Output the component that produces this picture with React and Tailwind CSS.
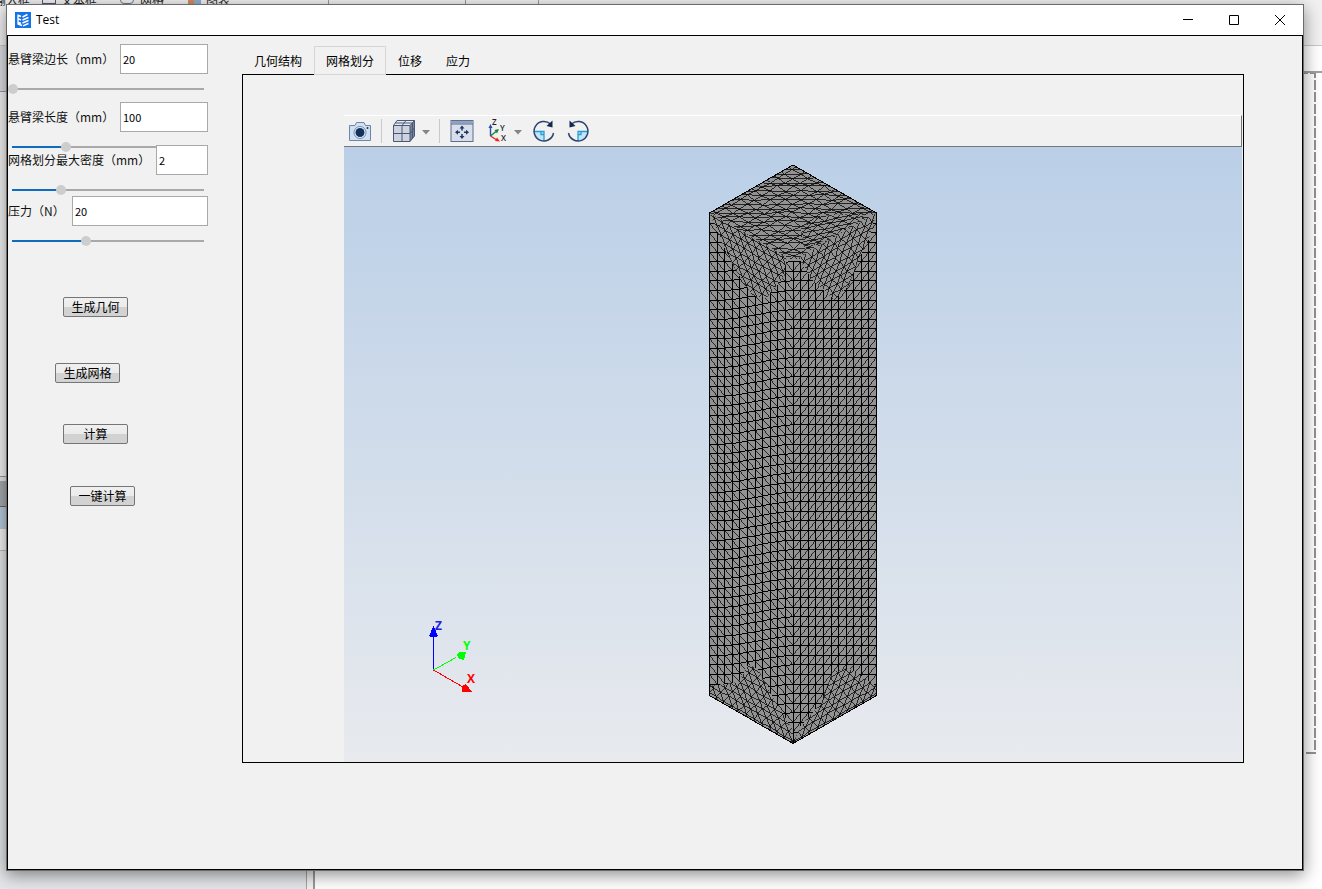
import { useState } from "react";

// ---- mesh geometry (svg units, one unit per pixel) ----

const GREY = "#929292";
const COLS = 11;
const COL_W = 83.5 / COLS;
const ROW_H = 9.6;
const LEFT_DRIFT = [0, 0, 0, -0.5, -1.5, -3, -4, -5.5, -7, -8, -9, -9.6];
const NO_DRIFT = LEFT_DRIFT.map(() => 0);

const jitter = (i, j, amount) => {
  const s = Math.sin(i * 127.1 + j * 311.7) * 43758.5453;
  return (s - Math.floor(s) - 0.5) * amount;
};

const line = (a, b) =>
  `M${a[0].toFixed(1)} ${a[1].toFixed(1)}L${b[0].toFixed(1)} ${b[1].toFixed(1)}`;

// Regular columns and rows, with one diagonal per cell kept as a thinner path
const grid = (x0, drift, falling) => {
  const node = (i, j) => [x0 + j * COL_W, 40 + i * ROW_H + drift[j]];
  let d = "";
  let diagonals = "";
  for (let i = 0; i < 58; i++) {
    for (let j = 0; j <= COLS; j++) {
      d += line(node(i, j), node(i + 1, j));
      if (j < COLS) {
        d += line(node(i, j), node(i, j + 1));
        diagonals += falling
          ? line(node(i, j), node(i + 1, j + 1))
          : line(node(i + 1, j), node(i, j + 1));
      }
    }
  }
  return { d, diagonals };
};

// Free triangle mesh spanned by the vectors a and b
const lattice = (origin, a, b, amount) => {
  const node = (i, j) => [
    origin[0] + i * a[0] + j * b[0] + jitter(i, j, amount),
    origin[1] + i * a[1] + j * b[1] + jitter(j + 40, i, amount),
  ];
  let diagonals = "";
  for (let i = -16; i < 16; i++) {
    for (let j = -16; j < 16; j++) {
      diagonals += line(node(i, j), node(i + 1, j));
      diagonals += line(node(i, j), node(i, j + 1));
      diagonals += line(node(i + 1, j), node(i, j + 1));
    }
  }
  return { d: "", diagonals };
};

const faces = [
  {
    id: "face-left",
    points: "1,49 84.5,97 84.5,579.5 1,531.5",
    ...grid(1, LEFT_DRIFT, true),
  },
  {
    id: "face-right",
    points: "84.5,97 168,49 168,531.5 84.5,579.5",
    ...grid(84.5, NO_DRIFT, false),
  },
  {
    id: "face-top",
    points: "84.5,1 168,49 84.5,97 1,49",
    ...lattice([84.5, 49], [7.6, -4.4], [-7.6, -4.4], 2.4),
  },
  {
    id: "face-top-dense",
    points: "92,64 112,52 158,49 150,57 118,76 96,84",
    ...lattice([110, 62], [12, -2.5], [6, 2.8], 1.4),
  },
  {
    id: "patch-left-top",
    points: "1,49 78,93 76,112 58,134 44,132 26,104 16,84",
    ...lattice([40, 80], [7.6, 4.4], [3.4, 9], 1.6),
  },
  {
    id: "patch-right-top",
    points: "168,49 90,94 104,116 126,136 140,122 150,96 160,76",
    ...lattice([130, 84], [-7.6, 4.4], [-3.4, 9], 1.6),
  },
  {
    id: "patch-left-bottom",
    points: "1,531.5 1,522 30,518 40,500 50,506 68,540 84.5,566 84.5,579.5",
    ...lattice([50, 550], [-7.6, -4.4], [-3.4, -9], 1.6),
  },
  {
    id: "patch-right-bottom",
    points: "168,531.5 168,522 140,504 124,508 112,540 92,562 84.5,579.5",
    ...lattice([120, 550], [7.6, -4.4], [3.4, -9], 1.6),
  },
];

const MeshModel = () => (
  <svg
    width="170"
    height="581"
    viewBox="-0.5 0 170 581"
    fill="none"
    stroke="#000"
    shapeRendering="crispEdges"
    role="img"
    aria-label="网格模型"
  >
    {faces.map((face) => (
      <g key={face.id}>
        <clipPath id={face.id}>
          <polygon points={face.points} />
        </clipPath>
        <polygon points={face.points} fill={GREY} stroke="none" />
        <g clipPath={`url(#${face.id})`}>
          <path d={face.d} />
          <path d={face.diagonals} strokeWidth="0.75" />
        </g>
      </g>
    ))}
    <path d="M84.5 1L168 49V531.5L84.5 579.5L1 531.5V49ZM84.5 97V579.5" />
  </svg>
);

const AxisTriad = () => (
  <svg
    className="absolute bottom-[60px] left-[80px]"
    width="60"
    height="84"
    viewBox="0 0 60 84"
    fontFamily="'Open Sans', sans-serif"
    fontSize="12"
    fontWeight="700"
  >
    <g shapeRendering="crispEdges">
      <path d="M9.500 52V14" stroke="#00f" />
      <path d="M9.500 52L32 39.500" stroke="#0f0" />
      <path d="M9.500 52L38 68.500" stroke="#f00" />
      <path d="M9.500 8L14 18Q9.500 21 5 18Z" fill="#00f" />
      <path d="M42 34L40 42L35 41Q31 36 36 34Z" fill="#0f0" />
      <path d="M48 74L38 73.500Q36 68 42 66Z" fill="#f00" />
    </g>
    <text x="11" y="12" fill="#2222dd">Z</text>
    <text x="39" y="32" fill="#0f0">Y</text>
    <text x="43" y="65" fill="#f00">X</text>
  </svg>
);

// ---- toolbar icons ----

const CameraIcon = () => (
  <svg width="24" height="24" viewBox="0 0 24 24">
    <path
      d="M1.500 6.500H7L8.500 3.500H16L17.500 6.500H22.500V21.500H1.500Z"
      fill="#cfe0f2"
      stroke="#6d86a6"
      strokeLinejoin="round"
    />
    <circle cx="12" cy="13.500" r="6" fill="#e9f1fa" stroke="#7289a8" />
    <circle cx="12" cy="13.500" r="4.500" fill="#14305e" />
    <circle cx="19.500" cy="9" r="1" fill="#14305e" />
  </svg>
);

const CubeIcon = () => (
  <svg width="24" height="24" viewBox="0 0 24 24" strokeLinejoin="round">
    <path d="M1.500 6.500L5 1.500H22.500L18 6.500Z" fill="#e6ebf3" />
    <path d="M1.500 6.500H18V22.500H1.500Z" fill="#cdd3df" />
    <path d="M18 6.500L22.500 1.500V17L18 22.500Z" fill="#76839d" />
    <path
      d="M1.500 6.500L5 1.500H22.500V17L18 22.500H1.500ZM1.500 6.500H18V22.500M18 6.500L22.500 1.500M10 22.500V6.500L14 1.500M1.500 14.500H18L22.500 9M3.500 4H20.500V19.500"
      fill="none"
      stroke="#4a5876"
    />
  </svg>
);

const FitIcon = () => (
  <svg width="24" height="24" viewBox="0 0 24 24">
    <rect x="1" y="1.500" width="22" height="21" fill="#d9dfea" stroke="#5d6e8d" />
    <path d="M1.500 2H22.500V4.500H1.500Z" fill="#8ea4c6" />
    <path d="M1 5H23" stroke="#5d6e8d" />
    <path
      d="M12 6.500L14.500 9.500H9.500ZM12 20L14.500 17H9.500ZM5 13.200L8 10.700V15.700ZM19 13.200L16 10.700V15.700Z"
      fill="#1d3766"
    />
    <path
      d="M12 9V11.500M12 15V17.500M7.500 13.200H10M14 13.200H16.500"
      stroke="#1d3766"
      strokeWidth="1.500"
    />
  </svg>
);

const AxesIcon = () => (
  <svg
    width="24"
    height="24"
    viewBox="0 0 24 24"
    fill="none"
    fontFamily="'Open Sans', sans-serif"
    fontSize="8"
    fontWeight="600"
  >
    <path d="M4.500 17V8" stroke="#2150a8" strokeWidth="1.400" />
    <path d="M4.500 5L6.500 9H2.500Z" fill="#2150a8" />
    <path d="M4.500 17L10 12.500" stroke="#16873a" strokeWidth="1.400" />
    <path d="M13 10L11 14.500L8.500 11Z" fill="#16873a" />
    <path d="M4.500 17L10 20.500" stroke="#e22" strokeWidth="1.400" />
    <path d="M14 22.500L9 22L11 18.500Z" fill="#e22" />
    <text x="6" y="6" fill="#222">Z</text>
    <text x="14" y="12" fill="#222">Y</text>
    <text x="15" y="22" fill="#222">X</text>
  </svg>
);

const RotateIcon = ({ flipped }) => (
  <svg
    width="24"
    height="24"
    viewBox="0 0 24 24"
    fill="none"
    className={flipped ? "-scale-x-100" : ""}
  >
    <path d="M2 12.500H12V22Q3 21 2 12.500Z" fill="#bfe6fa" />
    <path d="M2 12.500H12V22M9 12.500V15.500H12" stroke="#2b9bd6" strokeWidth="1.300" />
    <path
      d="M18.500 5A9.800 9.800 0 1 0 21.500 14"
      stroke="#2c4370"
      strokeWidth="1.500"
    />
    <path d="M20.500 1.500V8.500L14.500 7Z" fill="#14284f" />
  </svg>
);

const ToolButton = ({ label, children, className = "" }) => (
  <button type="button" aria-label={label} className={`shrink-0 ${className}`}>
    {children}
  </button>
);

const DropArrow = ({ label }) => (
  <ToolButton label={label}>
    <svg width="10" height="24" viewBox="0 0 10 24">
      <path d="M1 11H9L5 15.500Z" fill="#858585" />
    </svg>
  </ToolButton>
);

const Toolbar = () => (
  <div className="flex h-8 items-center border-t border-r border-b border-t-white border-r-[#777] border-b-[#777] pl-1">
    <ToolButton label="截图">
      <CameraIcon />
    </ToolButton>
    <span className="mr-[10px] ml-[9px] h-6 w-px bg-[#c8c8c8]" />
    <ToolButton label="视图">
      <CubeIcon />
    </ToolButton>
    <span className="w-[5px]" />
    <DropArrow label="视图选项" />
    <span className="mr-[10px] ml-2 h-6 w-px bg-[#c8c8c8]" />
    <ToolButton label="适应窗口">
      <FitIcon />
    </ToolButton>
    <ToolButton label="坐标轴" className="mr-[3px] ml-3">
      <AxesIcon />
    </ToolButton>
    <DropArrow label="坐标轴选项" />
    <ToolButton label="顺时针旋转" className="mr-[10px] ml-[9px]">
      <RotateIcon />
    </ToolButton>
    <ToolButton label="逆时针旋转">
      <RotateIcon flipped />
    </ToolButton>
  </div>
);

// ---- parameters ----

const params = [
  {
    id: "edge",
    label: "悬臂梁边长（mm）",
    value: "20",
    min: 20,
    max: 60,
    height: "h-[58px]",
    width: "w-[88px]",
  },
  {
    id: "length",
    label: "悬臂梁长度（mm）",
    value: "100",
    min: 50,
    max: 230,
    height: "h-[43px]",
    width: "w-[88px]",
  },
  {
    id: "density",
    label: "网格划分最大密度（mm）",
    value: "2",
    min: 1,
    max: 5,
    height: "h-[51px]",
    width: "w-[52px]",
  },
  {
    id: "force",
    label: "压力（N）",
    value: "20",
    min: 0,
    max: 52,
    height: "h-[60px]",
    width: "w-[136px]",
  },
];

const ParamField = ({ param }) => {
  const [value, setValue] = useState(param.value);
  const ratio = Math.min(
    1,
    Math.max(0, (Number(value) - param.min) / (param.max - param.min))
  );
  const stop = `calc(5px + ${ratio} * (100% - 10px))`;

  return (
    <div className={`relative ${param.height}`}>
      <div className="flex items-center justify-between">
        <label htmlFor={param.id} className="whitespace-nowrap text-[#111]">
          {param.label}
        </label>
        <input
          id={param.id}
          type="text"
          value={value}
          onChange={(e) => setValue(e.target.value)}
          className={`h-[30px] border border-[#a9a9a9] bg-white px-[2px] text-[11px] text-black outline-none ${param.width}`}
        />
      </div>
      <input
        type="range"
        aria-label={param.label}
        min={param.min}
        max={param.max}
        value={value}
        onChange={(e) => setValue(e.target.value)}
        style={{
          "--track": `linear-gradient(to right, transparent 4px, #0f6cbf 4px, #0f6cbf ${stop}, #a9a9a9 ${stop}, #a9a9a9 calc(100% - 4px), transparent calc(100% - 4px))`,
        }}
        className="block h-[30px] w-full appearance-none bg-transparent [&::-webkit-slider-runnable-track]:h-[2px] [&::-webkit-slider-runnable-track]:bg-(image:--track) [&::-webkit-slider-thumb]:-mt-1 [&::-webkit-slider-thumb]:size-[10px] [&::-webkit-slider-thumb]:appearance-none [&::-webkit-slider-thumb]:rounded-full [&::-webkit-slider-thumb]:bg-[#cdcdcd]"
      />
    </div>
  );
};

const ActionButton = ({ children, className }) => (
  <button
    type="button"
    className={`block h-5 w-[65px] rounded-[2px] border border-[#757575] bg-linear-to-b from-[#f0f0f0] from-0% via-[#ebebeb] via-50% to-[#d2d2d2] to-50% text-center leading-[18px] text-black ${className}`}
  >
    {children}
  </button>
);

const Sidebar = () => (
  <aside className="w-[200px] shrink-0 pt-2">
    {params.map((param) => (
      <ParamField key={param.id} param={param} />
    ))}
    <ActionButton className="mt-[41px] ml-[55px]">生成几何</ActionButton>
    <ActionButton className="mt-[46px] ml-[47px]">生成网格</ActionButton>
    <ActionButton className="mt-[41px] ml-[55px]">计算</ActionButton>
    <ActionButton className="mt-[42px] ml-[62px]">一键计算</ActionButton>
  </aside>
);

// ---- window ----

const tabs = ["几何结构", "网格划分", "位移", "应力"];

const Workspace = () => {
  const [active, setActive] = useState("网格划分");

  return (
    <main className="mr-[58px] mb-[106px] ml-[34px] flex min-w-0 flex-1 flex-col pt-[10px]">
      <div role="tablist" className="flex">
        {tabs.map((tab) => (
          <button
            key={tab}
            type="button"
            role="tab"
            aria-selected={tab === active}
            onClick={() => setActive(tab)}
            className={`relative -mb-px h-[29px] border px-[11px] text-black ${
              tab === active
                ? "border-[#d6d6d6] bg-[#f1f1f1]"
                : "border-transparent"
            }`}
          >
            {tab}
          </button>
        ))}
      </div>
      <div
        role="tabpanel"
        className="flex flex-1 flex-col border border-black pt-10 pr-px pl-[101px]"
      >
        <Toolbar />
        <div className="relative flex flex-1 items-center justify-center bg-linear-to-b from-[#bacfe7] to-[#e8eaee]">
          <MeshModel />
          <AxisTriad />
        </div>
      </div>
    </main>
  );
};

const AppLogo = () => (
  <svg width="16" height="16" viewBox="0 0 16 16">
    <rect width="16" height="16" fill="#1473e6" />
    <path
      d="M2.500 3L6 4.500M2.500 6.500L6 8M2.500 10L6 11.500M3 3V12L7 13.500M7.500 5L12.500 2.500M7.500 8L13.500 5.500M7.500 11L13.500 8.500M8 13.800L13.500 11.500"
      fill="none"
      stroke="#fff"
      strokeWidth="1.400"
    />
  </svg>
);

const TitleBar = () => (
  <header className="flex h-[30px] items-center bg-white pl-2">
    <AppLogo />
    <h1 className="ml-[5px] flex-1 font-['Open_Sans',sans-serif] text-xs text-black">
      Test
    </h1>
    {[
      ["最小化", "M0 4.500H10"],
      ["最大化", "M0.500 0.500H9.500V9.500H0.500Z"],
      ["关闭", "M0 0L10 10M10 0L0 10"],
    ].map(([label, d]) => (
      <button
        key={label}
        type="button"
        aria-label={label}
        className="flex h-full w-[46px] items-center justify-center"
      >
        <svg width="10" height="10" viewBox="0 0 10 10" fill="none" stroke="#000">
          <path d={d} />
        </svg>
      </button>
    ))}
  </header>
);

// Editor that stays visible around the window's edges
const Backdrop = () => (
  <div
    aria-hidden="true"
    className="absolute inset-0 flex flex-col overflow-hidden bg-[#f1f1f1] text-[#222]"
  >
    <div className="h-[46px] shrink-0 border-b border-[#c8c8c8]">
      <div className="flex h-1 items-end leading-[8px]">
        <span className="-ml-[6px] w-9 whitespace-nowrap">输入框</span>
        <span className="ml-3 size-[14px] border border-[#557]" />
        <span className="ml-[5px] w-9 whitespace-nowrap">文本框</span>
        <span className="ml-[23px] size-[14px] rounded border border-[#778]" />
        <span className="ml-[6px] w-6 whitespace-nowrap">网格</span>
        <span className="ml-6 h-3 w-[6px] bg-[#d98b5f]" />
        <span className="h-3 w-[7px] bg-[#8fb0d0]" />
        <span className="ml-[5px] w-6 whitespace-nowrap">图表</span>
        <span className="ml-[98px] h-3 w-px bg-[#999]" />
        <span className="ml-[136px] h-3 w-px bg-[#999]" />
        <span className="ml-[72px] h-3 w-px bg-[#999]" />
      </div>
    </div>
    <div className="flex flex-1">
      <div className="flex w-[307px] flex-col border-r border-[#a3a3a3] bg-[#e4e6e9]">
        <div className="h-[46px] border-b border-[#999] bg-[#dcdee1]" />
        <div className="h-[385px] border-b border-[#999] bg-[#f1f1f1]" />
        <div className="mt-1 h-[26px] border-b border-[#666] bg-[#a6aaad]" />
        <div className="h-[22px] bg-[#b8cbdd]" />
        <div className="h-[22px] border-b border-[#bbb] bg-[#f4f4f4]" />
      </div>
      <div className="ml-[6px] flex flex-1 flex-col border-l-2 border-[#999] bg-white pt-[25px]">
        <div className="h-[2px] bg-[#a0a0a0]" />
        <div className="mr-[6px] mb-[135px] flex flex-1 flex-col">
          <div className="h-px bg-[repeating-linear-gradient(to_left,#929292_0_6px,transparent_6px_8px)]" />
          <div className="w-[2px] flex-1 self-end bg-[repeating-linear-gradient(#929292_0_4px,transparent_4px_6px,#929292_6px_12px)]" />
          <div className="h-[2px] bg-[repeating-linear-gradient(to_left,#929292_0_10px,transparent_10px_12px)]" />
        </div>
      </div>
    </div>
  </div>
);

const App = () => (
  <div className="relative flex min-h-screen flex-col font-['Noto_Sans_CJK_SC',sans-serif] text-xs">
    <Backdrop />
    <div className="relative mt-1 mr-[18px] mb-[18px] ml-[6px] flex flex-1 flex-col border border-[#6b6b6b] shadow-[0_4px_16px_rgba(0,0,0,0.45)]">
      <TitleBar />
      <div className="flex flex-1 border border-black bg-[#f1f1f1]">
        <Sidebar />
        <Workspace />
      </div>
    </div>
  </div>
);

export default App;
